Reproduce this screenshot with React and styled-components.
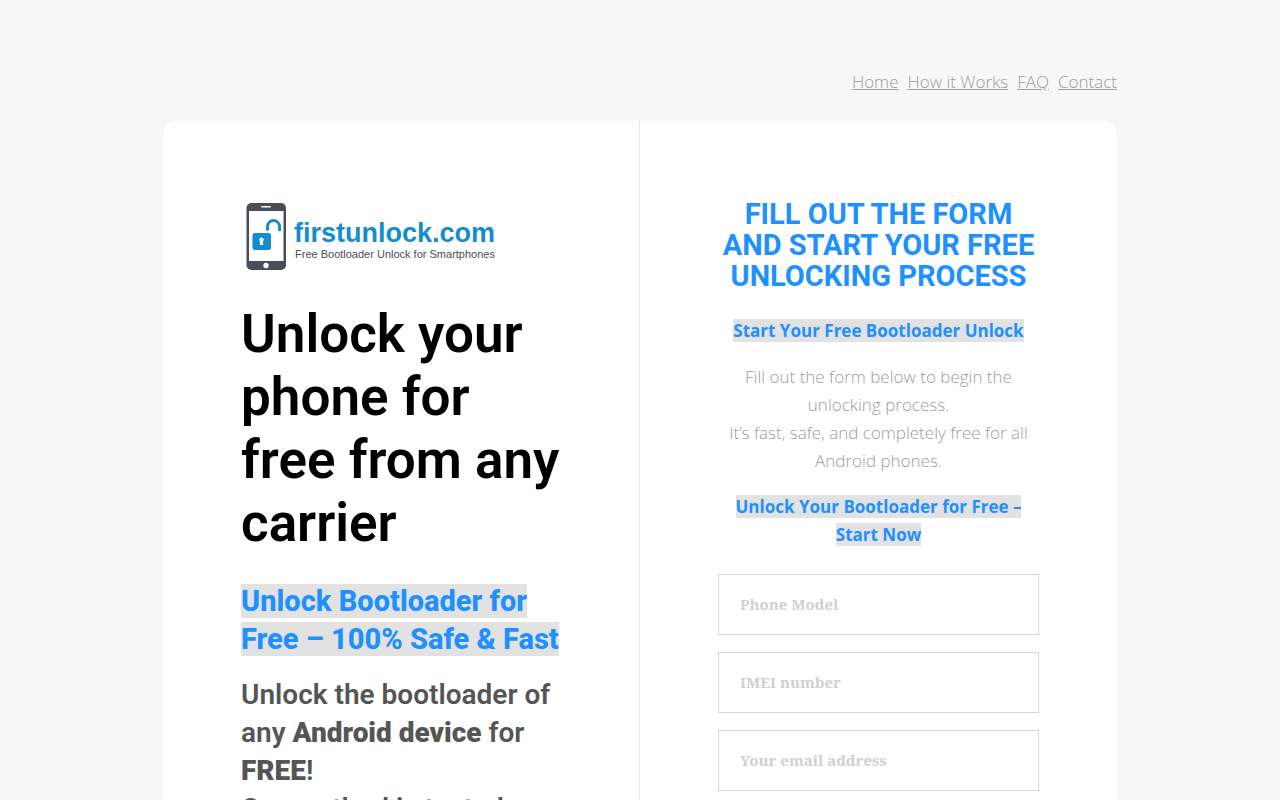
import React from 'react';
import styled, { createGlobalStyle } from 'styled-components';

const GlobalStyle = createGlobalStyle`
  * {
    box-sizing: border-box;
  }
  body {
    margin: 0;
    background: #f7f7f7;
    color: #9c9c9c;
    font: 300 17px/28px 'Open Sans', sans-serif;
  }
`;

const Page = styled.div`
  max-width: 1002px;
  margin: 0 auto;
  padding: 68px 24px 80px;
`;

const Nav = styled.nav`
  display: flex;
  justify-content: flex-end;
  gap: 9px;
  margin-bottom: 25px;
`;

const NavLink = styled.a`
  color: inherit;
  text-decoration: underline;
`;

const Card = styled.main`
  display: grid;
  grid-template-columns: 1fr 1fr;
  background: #fff;
  border-radius: 14px;
`;

const Column = styled.section`
  padding: 78px;
  text-align: ${({ $center }) => ($center ? 'center' : 'left')};
  border-right: ${({ $divider }) => ($divider ? '1px solid #e6e6e6' : '0')};
`;

const Logo = styled.svg`
  display: block;
  width: 262px;
  height: 74px;
  margin-bottom: 30px;
`;

const Title = styled.h1`
  margin: 0 0 27px;
  color: #000;
  font: 600 53px/63px Roboto, sans-serif;
`;

const Tagline = styled.h2`
  margin: 0 0 18px;
  font: 800 29px/38px Roboto, sans-serif;
`;

const Lead = styled.h3`
  margin: 0;
  color: #555;
  font: 600 28px/38px Roboto, sans-serif;
`;

const Highlight = styled.strong`
  color: #1e90ff;
  background: #e2e2e2;
  font-weight: inherit;
`;

const FormTitle = styled.h2`
  margin: 0 0 25px;
  color: #1e90ff;
  font: 700 29px/31px Roboto, sans-serif;
  text-transform: uppercase;
`;

const Paragraph = styled.p`
  margin: 0 0 18px;
`;

const Callout = styled(Paragraph)`
  font-weight: 700;
`;

const Form = styled.form`
  display: grid;
  gap: 17px;
  margin-top: 25px;
`;

const Field = styled.input`
  width: 100%;
  height: 61px;
  padding: 0 21px 2px;
  border: 1px solid #d5d5d5;
  border-radius: 0;
  background: #fff;
  color: #555;
  font: 700 15px/20px 'Noto Serif', serif;
  &::placeholder {
    color: #d0d0d0;
    opacity: 1;
  }
`;

const links = ['Home', 'How it Works', 'FAQ', 'Contact'];

const fields = [
  { name: 'model', label: 'Phone Model', type: 'text' },
  { name: 'imei', label: 'IMEI number', type: 'text' },
  { name: 'email', label: 'Your email address', type: 'email' },
];

const SiteLogo = () => (
  <Logo viewBox="0 0 262 74" role="img" aria-label="firstunlock.com">
    <rect x="5.5" y="4" width="39.5" height="67" rx="5" fill="#494d57" />
    <rect x="8" y="12" width="34.5" height="50" fill="#fff" />
    <rect x="20" y="7" width="10" height="1.6" rx="0.8" fill="#fff" />
    <circle cx="25" cy="66.5" r="2.7" fill="#fff" />
    <rect x="11.5" y="34" width="18.5" height="17" rx="2.5" fill="#148dd0" />
    <path d="M26.5 31.5v-4a6 6 0 0 1 12 0v4.5" fill="none" stroke="#148dd0" strokeWidth="3" />
    <path d="M18.9 42.300a2.200 2.200 0 1 1 3.200 0v3.700h-3.200z" fill="#fff" />
    <text x="53" y="43" fill="#148dd0" fontFamily="Liberation Sans, sans-serif" fontWeight="700" fontSize="27">
      firstunlock.com
    </text>
    <text x="54" y="59" fill="#494d57" fontFamily="Liberation Sans, sans-serif" fontWeight="400" fontSize="11">
      Free Bootloader Unlock for Smartphones
    </text>
  </Logo>
);

const App = () => (
  <>
    <GlobalStyle />
    <Page>
      <Nav>
        {links.map(link => (
          <NavLink key={link} href="#">
            {link}
          </NavLink>
        ))}
      </Nav>
      <Card>
        <Column $divider>
          <SiteLogo />
          <Title>Unlock your phone for free from any carrier</Title>
          <Tagline>
            <Highlight>Unlock Bootloader for Free – 100% Safe &amp; Fast</Highlight>
          </Tagline>
          <Lead>
            Unlock the bootloader of any <strong>Android device</strong> for <strong>FREE</strong>!
            <br />
            Our method is tested
          </Lead>
        </Column>
        <Column $center>
          <FormTitle>Fill out the form and start your free unlocking process</FormTitle>
          <Callout>
            <Highlight>Start Your Free Bootloader Unlock</Highlight>
          </Callout>
          <Paragraph>
            Fill out the form below to begin the unlocking process.
            <br />
            It’s fast, safe, and completely free for all Android phones.
          </Paragraph>
          <Callout>
            <Highlight>Unlock Your Bootloader for Free – Start Now</Highlight>
          </Callout>
          <Form>
            {fields.map(({ name, label, type }) => (
              <Field key={name} name={name} type={type} placeholder={label} aria-label={label} />
            ))}
          </Form>
        </Column>
      </Card>
    </Page>
  </>
);

export default App;
